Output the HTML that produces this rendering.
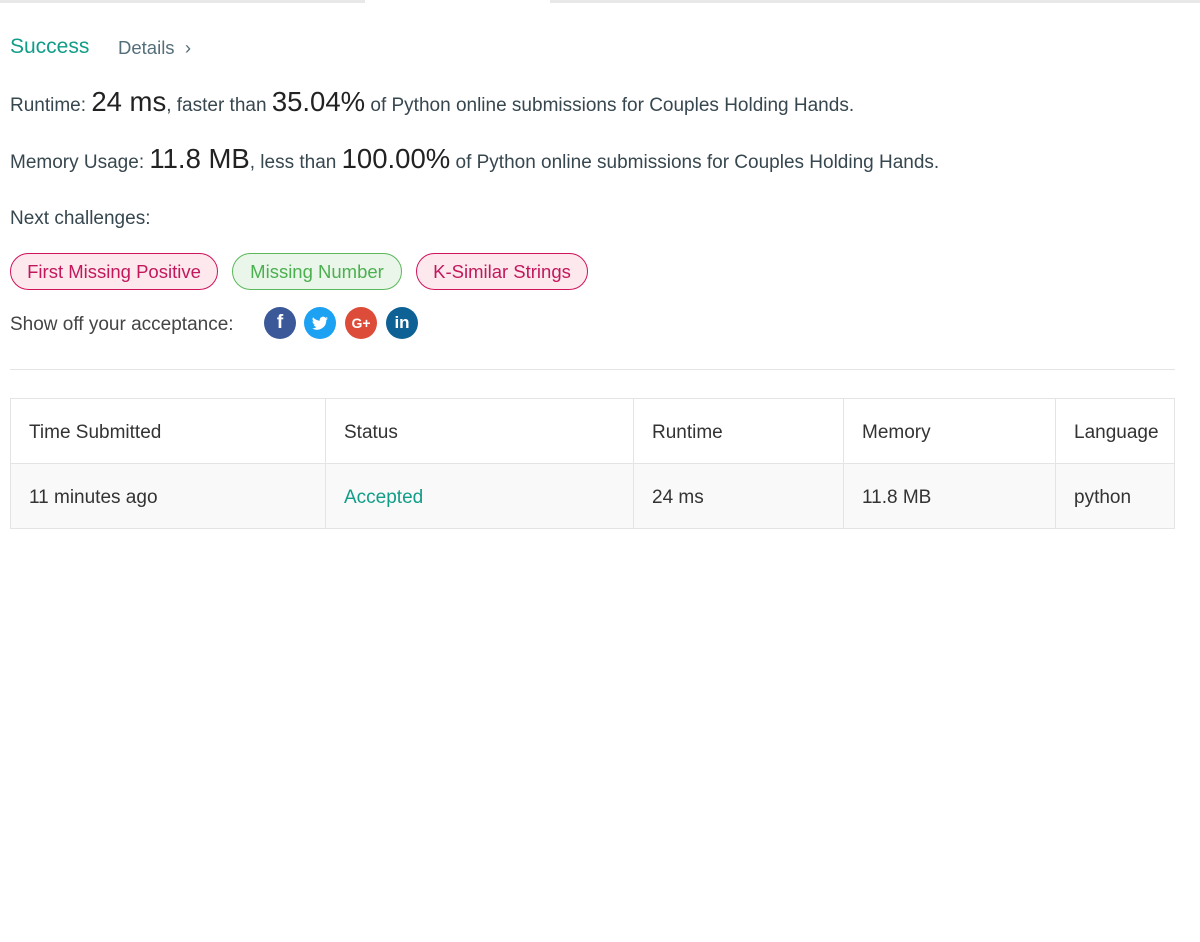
<!DOCTYPE html><html><head><style>
body{margin:0;background:#fff;font-family:"Liberation Sans",sans-serif;color:#333;width:1200px;height:942px;position:relative;overflow:hidden}
.a{position:absolute;white-space:nowrap}
.top1{position:absolute;top:0;left:0;width:365px;height:3px;background:#e8e8e8}
.top2{position:absolute;top:0;left:550px;width:650px;height:3px;background:#e8e8e8}
.big{font-size:27.5px;color:#222}
.pill{position:absolute;top:253px;height:37px;border-radius:19px;border:1px solid;box-sizing:border-box;font-size:18.5px;line-height:35px;text-align:center}
.ic{position:absolute;top:307px;width:32px;height:32px;border-radius:50%;color:#fff;font-weight:bold;text-align:center;line-height:32px;font-size:17px}
table{position:absolute;left:10px;top:398px;width:1165px;border-collapse:collapse;font-size:19px;color:#333}
td{border:1px solid #e4e4e4;height:65px;padding:4px 0 0 18px;box-sizing:border-box}
tr:nth-child(2){background:#f9f9f9}
</style></head><body>
<div class="top1"></div><div class="top2"></div>
<div class="a" style="left:10px;top:35px;font-size:21px;color:#119d88">Success</div>
<div class="a" style="left:118px;top:37px;font-size:18.5px;color:#546e7a">Details &nbsp;›</div>
<div class="a" style="left:10px;top:86px;font-size:19px;color:#37474f">Runtime: <span class="big">24 ms</span>, faster than <span class="big">35.04%</span> of Python online submissions for Couples Holding Hands.</div>
<div class="a" style="left:10px;top:143px;font-size:19px;color:#37474f">Memory Usage: <span class="big">11.8 MB</span>, less than <span class="big">100.00%</span> of Python online submissions for Couples Holding Hands.</div>
<div class="a" style="left:10px;top:208px;font-size:19px;color:#37474f">Next challenges:</div>
<div class="pill" style="left:10px;width:208px;background:#fde8ee;border-color:#d0145c;color:#c2185b">First Missing Positive</div>
<div class="pill" style="left:232px;width:170px;background:#eaf6ea;border-color:#5cb85c;color:#4caf50">Missing Number</div>
<div class="pill" style="left:416px;width:172px;background:#fde8ee;border-color:#d0145c;color:#c2185b">K-Similar Strings</div>
<div class="a" style="left:10px;top:314px;font-size:19px;color:#444">Show off your acceptance:</div>
<div class="ic" style="left:264px;background:#3b5998;font-size:19px">f</div>
<div class="ic" style="left:304px;background:#1da1f2"><svg width="32" height="32" viewBox="0 0 32 32"><path fill="#fff" d="M24 11.2c-.6.3-1.2.4-1.9.5.7-.4 1.2-1 1.4-1.8-.6.4-1.3.6-2.1.8a3.3 3.3 0 0 0-5.6 3A9.300 9.300 0 0 1 9 10.300a3.300 3.300 0 0 0 1 4.400c-.5 0-1-.2-1.500-.4 0 1.600 1.100 2.900 2.600 3.200-.5.100-1 .2-1.500.1.400 1.300 1.600 2.300 3.100 2.300A6.600 6.600 0 0 1 8 21.300a9.300 9.300 0 0 0 14.300-8.300c.7-.5 1.200-1.100 1.700-1.800z"/></svg></div>
<div class="ic" style="left:345px;background:#dd4b39;font-size:14px">G+</div>
<div class="ic" style="left:386px;background:#0e6195">in</div>
<div style="position:absolute;left:10px;top:369px;width:1165px;height:1px;background:#e4e4e4"></div>
<table><tr><td style="width:315px">Time Submitted</td><td style="width:308px">Status</td><td style="width:210px">Runtime</td><td style="width:212px">Memory</td><td>Language</td></tr>
<tr><td>11 minutes ago</td><td style="color:#119d88">Accepted</td><td>24 ms</td><td>11.8 MB</td><td>python</td></tr></table>
</body></html>
